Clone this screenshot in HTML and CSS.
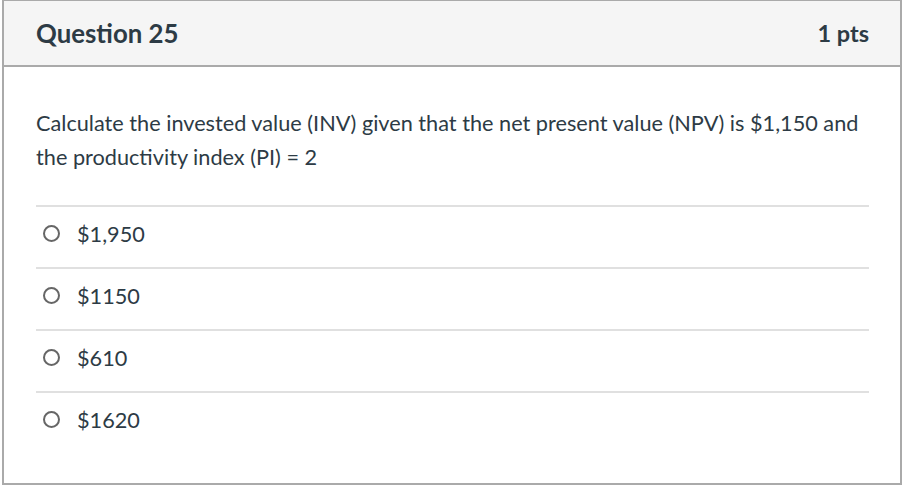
FILE: index.html
```html
<!DOCTYPE html>
<html>
<head>
<meta charset="utf-8">
<link rel="stylesheet" href="styles.css">
</head>
<body>
<div class="question">
  <div class="q-header">
    <h2 class="q-title">Question 25</h2>
    <div class="q-pts">1 pts</div>
  </div>
  <div class="q-body">
    <p class="q-text">Calculate the invested value (INV) given that the net present value (NPV) is $1,150 and the productivity index (PI) = 2</p>
    <div class="answers">
      <label class="answer"><span class="radio"></span><span class="a-text">$1,950</span></label>
      <label class="answer"><span class="radio"></span><span class="a-text">$1150</span></label>
      <label class="answer"><span class="radio"></span><span class="a-text">$610</span></label>
      <label class="answer"><span class="radio"></span><span class="a-text">$1620</span></label>
    </div>
  </div>
</div>
</body>
</html>
```

FILE: styles.css
```css
html, body {
  margin: 0;
  padding: 0;
  background: #fff;
}
body {
  font-family: Lato, "Liberation Sans", sans-serif;
  color: #2d3b45;
}
.question {
  margin-left: 2px;
  width: 896px;
  height: 482px;
  border: 2px solid #aaaaaa;
  border-top-width: 1px;
}
.q-header {
  display: flex;
  justify-content: space-between;
  align-items: center;
  height: 64px;
  background: #f5f5f5;
  border-bottom: 2px solid #aaaaaa;
  padding: 0 31px 0 32px;
}
.q-title {
  margin: 0;
  font-size: 25.8px;
  font-weight: 700;
}
.q-pts {
  font-size: 23.5px;
  font-weight: 700;
  color: #2d3b45;
}
.q-body {
  padding: 0 31px 0 32px;
}
.q-text {
  margin: 0;
  padding: 39px 0 31px;
  font-size: 21.7px;
  line-height: 34px;
}
.answers {
  display: flex;
  flex-direction: column;
}
.answer {
  display: flex;
  align-items: center;
  gap: 17px;
  height: 53px;
  padding-bottom: 7px;
  border-top: 2px solid #e0e0e0;
  padding-left: 7px;
  font-size: 21.7px;
}
.radio {
  box-sizing: border-box;
  width: 17px;
  height: 17px;
  border: 2px solid #666666;
  border-radius: 50%;
  flex: none;
}
```
